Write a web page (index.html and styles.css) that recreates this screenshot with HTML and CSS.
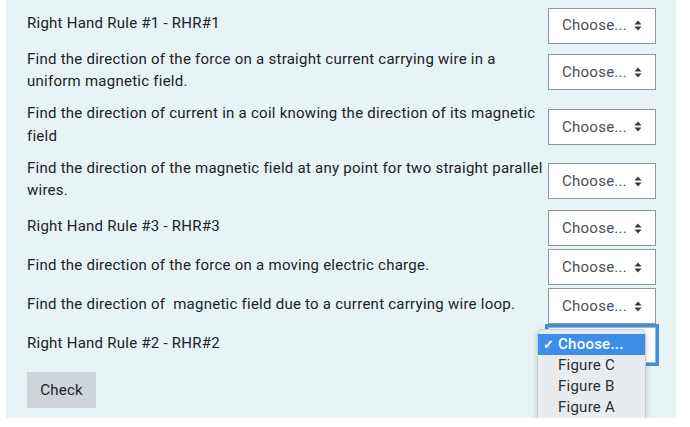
FILE: index.html
```html
<!DOCTYPE html>
<html lang="en">
<head>
<meta charset="utf-8">
<title>Matching question</title>
<link rel="stylesheet" href="styles.css">
</head>
<body>
<div class="panel">
  <div class="answer">
    <div class="row">
      <div class="text">Right Hand Rule #1 - RHR#1</div>
      <div class="control"><div class="select"><span>Choose...</span><svg class="caret" width="8" height="11" viewBox="0 0 8 11"><path d="M4 0.5 L7.5 4.5 H0.5 Z M4 10.5 L7.5 6.5 H0.5 Z" fill="#343a40"/></svg></div></div>
    </div>
    <div class="row">
      <div class="text">Find the direction of the force on a straight current carrying wire in a uniform magnetic field.</div>
      <div class="control"><div class="select"><span>Choose...</span><svg class="caret" width="8" height="11" viewBox="0 0 8 11"><path d="M4 0.5 L7.5 4.5 H0.5 Z M4 10.5 L7.5 6.5 H0.5 Z" fill="#343a40"/></svg></div></div>
    </div>
    <div class="row">
      <div class="text">Find the direction of current in a coil knowing the direction of its magnetic field</div>
      <div class="control"><div class="select"><span>Choose...</span><svg class="caret" width="8" height="11" viewBox="0 0 8 11"><path d="M4 0.5 L7.5 4.5 H0.5 Z M4 10.5 L7.5 6.5 H0.5 Z" fill="#343a40"/></svg></div></div>
    </div>
    <div class="row">
      <div class="text">Find the direction of the magnetic field at any point for two straight parallel wires.</div>
      <div class="control"><div class="select"><span>Choose...</span><svg class="caret" width="8" height="11" viewBox="0 0 8 11"><path d="M4 0.5 L7.5 4.5 H0.5 Z M4 10.5 L7.5 6.5 H0.5 Z" fill="#343a40"/></svg></div></div>
    </div>
    <div class="row">
      <div class="text">Right Hand Rule #3 - RHR#3</div>
      <div class="control"><div class="select"><span>Choose...</span><svg class="caret" width="8" height="11" viewBox="0 0 8 11"><path d="M4 0.5 L7.5 4.5 H0.5 Z M4 10.5 L7.5 6.5 H0.5 Z" fill="#343a40"/></svg></div></div>
    </div>
    <div class="row">
      <div class="text">Find the direction of the force on a moving electric charge.</div>
      <div class="control"><div class="select"><span>Choose...</span><svg class="caret" width="8" height="11" viewBox="0 0 8 11"><path d="M4 0.5 L7.5 4.5 H0.5 Z M4 10.5 L7.5 6.5 H0.5 Z" fill="#343a40"/></svg></div></div>
    </div>
    <div class="row">
      <div class="text">Find the direction of&nbsp; magnetic field due to a current carrying wire loop.</div>
      <div class="control"><div class="select"><span>Choose...</span><svg class="caret" width="8" height="11" viewBox="0 0 8 11"><path d="M4 0.5 L7.5 4.5 H0.5 Z M4 10.5 L7.5 6.5 H0.5 Z" fill="#343a40"/></svg></div></div>
    </div>
    <div class="row">
      <div class="text">Right Hand Rule #2 - RHR#2</div>
      <div class="control">
        <div class="select focused"></div>
        <ul class="menu">
          <li class="item active"><span class="check">✓</span>Choose...</li>
          <li class="item">Figure C</li>
          <li class="item">Figure B</li>
          <li class="item">Figure A</li>
        </ul>
      </div>
    </div>
  </div>
  <button class="check-btn" type="button">Check</button>
</div>
</body>
</html>
```
FILE: styles.css
```css
* { box-sizing: border-box; }
html, body { margin: 0; padding: 0; background: #ffffff; }
body {
  font-family: Roboto, "Liberation Sans", Arial, sans-serif;
  font-size: 15px;
  line-height: 22.5px;
  letter-spacing: 0.25px;
  color: #1d2125;
}
.panel {
  background: #e7f3f5;
  margin: 0 14px 0 6px;
  padding: 6px 20px 10px 21px;
}
.answer { display: flex; flex-direction: column; }
.row {
  display: grid;
  grid-template-columns: 521px 108px;
  align-items: center;
}
.text {
  padding: 2.5px 1px 7px 0;
}
.control {
  position: relative;
  padding: 1.5px 0;
}
.select {
  height: 36px;
  width: 108px;
  border: 1px solid #8f959e;
  background: #ffffff;
  color: #495057;
  display: flex;
  align-items: center;
  justify-content: space-between;
  padding: 0 13px 0 13px;
}
.select.focused {
  border-color: #8fb8e6;
  box-shadow: 0 0 0 3px #4290dc;
}
.caret { display: block; }
.menu {
  position: absolute;
  left: -11px;
  top: 3px;
  width: 109px;
  margin: 0;
  padding: 4px 0 3px;
  list-style: none;
  background: #e9ecee;
  border: 1px solid #c9cdd1;
  border-radius: 6px;
  box-shadow: 0 2px 6px rgba(0,0,0,0.18);
  z-index: 2;
}
.item {
  height: 21px;
  line-height: 21px;
  padding-left: 20px;
  color: #2b2f33;
  position: relative;
}
.item.active {
  background: #3c8ee9;
  color: #ffffff;
  font-weight: 500;
}
.check {
  position: absolute;
  left: 5px;
  top: 0;
  font-size: 13px;
  font-weight: 700;
}
.check-btn {
  margin-top: 7px;
  height: 36px;
  width: 69px;
  border: none;
  background: #ced4da;
  color: #1d2125;
  font-family: inherit;
  font-size: 15px;
  letter-spacing: 0.25px;
  padding: 0;
  display: block;
}
```
